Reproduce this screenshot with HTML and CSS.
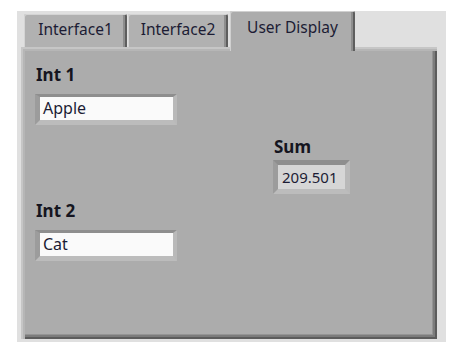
FILE: index.html
```html
<!DOCTYPE html>
<html lang="en">
<head>
    <meta charset="UTF-8">
    <title>User Display</title>
    <link rel="stylesheet" href="styles.css">
</head>
<body>
    <div class="window">
        <div class="tabs">
            <div class="tab tab-1">Interface1</div>
            <div class="tab tab-2">Interface2</div>
            <div class="tab tab-active">User Display</div>
        </div>
        <div class="panel">
            <div class="col-left">
                <div class="control">
                    <div class="label">Int 1</div>
                    <div class="string">Apple</div>
                </div>
                <div class="control control-int2">
                    <div class="label">Int 2</div>
                    <div class="string">Cat</div>
                </div>
            </div>
            <div class="col-right">
                <div class="control">
                    <div class="label">Sum</div>
                    <div class="indicator">209.501</div>
                </div>
            </div>
        </div>
    </div>
</body>
</html>
```

FILE: styles.css
```css
body {
    margin: 0;
    background: #ffffff;
    font-family: 'Noto Sans', 'Open Sans', sans-serif;
    color: #1c1c34;
}

/* 外框 */
.window {
    width: 429px;
    height: 331px;
    margin: 11px 0 0 17px;
    padding-left: 4px;
    background: #e0e0e0;
    box-sizing: border-box;
}

/* 标签页 */
.tabs {
    display: flex;
    align-items: flex-end;
    height: 36px;
    margin-left: 3px;
}
.tab {
    height: 33px;
    box-sizing: border-box;
    padding-top: 4px;
    font-size: 15.5px;
    line-height: 22px;
    text-align: center;
    background: #b1b1b1;
    border-radius: 2px 2px 0 0;
    box-shadow: inset 1px 1px 0 #d4d4d4, inset -2px 0 0 #5e5e5e, inset -4px 0 0 #8e8e8e;
}
.tab-1 {
    width: 103px;
    margin-right: 1px;
}
.tab-2 {
    width: 100px;
    margin-right: 2px;
}
.tab-active {
    position: relative;
    z-index: 1;
    width: 125px;
    height: 40px;
    margin-bottom: -4px;
    padding-top: 5px;
    background: #acacac;
    box-shadow: inset 1px 1px 0 #d0d0d0, inset -2px 0 0 #5e5e5e, inset -4px 0 0 #8e8e8e;
}

/* 面板 */
.panel {
    display: flex;
    width: 416px;
    height: 292px;
    box-sizing: border-box;
    padding: 18px 0 0 14px;
    background: #acacac;
    box-shadow: inset 2px 2px 0 #c6c6c6, inset 4px 4px 0 #b6b6b6,
                inset -2px -2px 0 #5c5c5c, inset -4px -4px 0 #7c7c7c, inset -5px -5px 0 #949494;
}
.col-left {
    width: 142px;
}
.col-right {
    margin-left: 96px;
    padding-top: 72px;
}
.control-int2 {
    margin-top: 76px;
}

.label {
    margin-left: 1px;
    font-size: 17px;
    font-weight: bold;
    line-height: 20px;
    color: #151520;
}

.string {
    width: 142px;
    height: 31px;
    box-sizing: border-box;
    margin-top: 9px;
    padding-left: 3px;
    border: 4px solid;
    border-color: #8e8e8e #b9b9b9 #bcbcbc #9c9c9c;
    border-width: 3px 4px 5px 5px;
    background: #fafafa;
    font-size: 16px;
    line-height: 23px;
}

.indicator {
    width: 77px;
    height: 34px;
    box-sizing: border-box;
    margin-top: 3px;
    padding-left: 4px;
    border: 5px solid;
    border-color: #8e8e8e #b9b9b9 #bcbcbc #9c9c9c;
    background: #d6d6d6;
    font-size: 15px;
    line-height: 24px;
}
```
